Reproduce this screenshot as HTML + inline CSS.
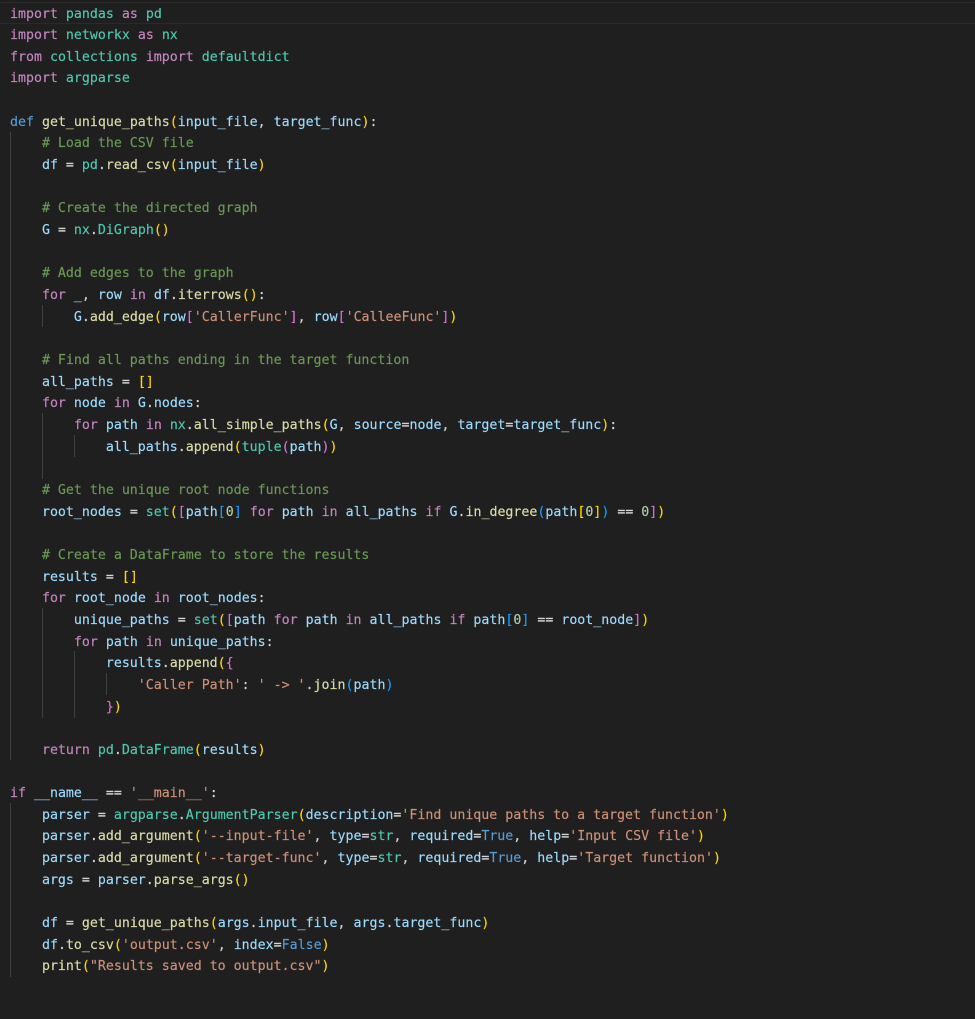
<!DOCTYPE html>
<html><head><meta charset="utf-8"><style>
html,body{margin:0;padding:0;background:#1f1f1f;width:975px;height:1019px;overflow:hidden}
.cur{position:absolute;left:0;top:2px;width:975px;height:20px;border-top:1px solid #2a2a2a;border-bottom:1px solid #2a2a2a}
pre{position:absolute;left:10px;top:3.5px;margin:0;font-family:"DejaVu Sans Mono","Liberation Mono",monospace;font-size:13.27px;line-height:21.65px;color:#d4d4d4;-webkit-text-stroke:0.15px}
.g{position:absolute;width:1px;background:#404040}
.k{color:#c586c0}.d{color:#569cd6}.m{color:#4ec9b0}.v{color:#9cdcfe}.f{color:#dcdcaa}.c{color:#6a9955}.s{color:#ce9178}.n{color:#b5cea8}.y{color:#ffd700}.p{color:#da70d6}.b{color:#179fff}
</style></head><body>
<div class="cur"></div>
<div class="g" style="left:10px;top:132px;height:628px"></div>
<div class="g" style="left:42px;top:305px;height:22px"></div>
<div class="g" style="left:42px;top:413px;height:66px"></div>
<div class="g" style="left:42px;top:608px;height:110px"></div>
<div class="g" style="left:74px;top:435px;height:22px"></div>
<div class="g" style="left:74px;top:651px;height:67px"></div>
<div class="g" style="left:106px;top:673px;height:22px"></div>
<div class="g" style="left:10px;top:803px;height:174px"></div>
<pre><span class="k">import</span> <span class="m">pandas</span> <span class="k">as</span> <span class="m">pd</span>
<span class="k">import</span> <span class="m">networkx</span> <span class="k">as</span> <span class="m">nx</span>
<span class="k">from</span> <span class="m">collections</span> <span class="k">import</span> <span class="m">defaultdict</span>
<span class="k">import</span> <span class="m">argparse</span>

<span class="d">def</span> <span class="f">get_unique_paths</span><span class="y">(</span><span class="v">input_file</span>, <span class="v">target_func</span><span class="y">)</span>:
    <span class="c"># Load the CSV file</span>
    <span class="v">df</span> = <span class="m">pd</span>.<span class="f">read_csv</span><span class="y">(</span><span class="v">input_file</span><span class="y">)</span>

    <span class="c"># Create the directed graph</span>
    <span class="v">G</span> = <span class="m">nx</span>.<span class="m">DiGraph</span><span class="y">()</span>

    <span class="c"># Add edges to the graph</span>
    <span class="k">for</span> <span class="v">_</span>, <span class="v">row</span> <span class="k">in</span> <span class="v">df</span>.<span class="f">iterrows</span><span class="y">()</span>:
        <span class="v">G</span>.<span class="f">add_edge</span><span class="y">(</span><span class="v">row</span><span class="p">[</span><span class="s">'CallerFunc'</span><span class="p">]</span>, <span class="v">row</span><span class="p">[</span><span class="s">'CalleeFunc'</span><span class="p">]</span><span class="y">)</span>

    <span class="c"># Find all paths ending in the target function</span>
    <span class="v">all_paths</span> = <span class="y">[]</span>
    <span class="k">for</span> <span class="v">node</span> <span class="k">in</span> <span class="v">G</span>.<span class="v">nodes</span>:
        <span class="k">for</span> <span class="v">path</span> <span class="k">in</span> <span class="m">nx</span>.<span class="f">all_simple_paths</span><span class="y">(</span><span class="v">G</span>, <span class="v">source</span>=<span class="v">node</span>, <span class="v">target</span>=<span class="v">target_func</span><span class="y">)</span>:
            <span class="v">all_paths</span>.<span class="f">append</span><span class="y">(</span><span class="m">tuple</span><span class="p">(</span><span class="v">path</span><span class="p">)</span><span class="y">)</span>

    <span class="c"># Get the unique root node functions</span>
    <span class="v">root_nodes</span> = <span class="m">set</span><span class="y">(</span><span class="p">[</span><span class="v">path</span><span class="b">[</span><span class="n">0</span><span class="b">]</span> <span class="k">for</span> <span class="v">path</span> <span class="k">in</span> <span class="v">all_paths</span> <span class="k">if</span> <span class="v">G</span>.<span class="f">in_degree</span><span class="b">(</span><span class="v">path</span><span class="y">[</span><span class="n">0</span><span class="y">]</span><span class="b">)</span> == <span class="n">0</span><span class="p">]</span><span class="y">)</span>

    <span class="c"># Create a DataFrame to store the results</span>
    <span class="v">results</span> = <span class="y">[]</span>
    <span class="k">for</span> <span class="v">root_node</span> <span class="k">in</span> <span class="v">root_nodes</span>:
        <span class="v">unique_paths</span> = <span class="m">set</span><span class="y">(</span><span class="p">[</span><span class="v">path</span> <span class="k">for</span> <span class="v">path</span> <span class="k">in</span> <span class="v">all_paths</span> <span class="k">if</span> <span class="v">path</span><span class="b">[</span><span class="n">0</span><span class="b">]</span> == <span class="v">root_node</span><span class="p">]</span><span class="y">)</span>
        <span class="k">for</span> <span class="v">path</span> <span class="k">in</span> <span class="v">unique_paths</span>:
            <span class="v">results</span>.<span class="f">append</span><span class="y">(</span><span class="p">{</span>
                <span class="s">'Caller Path'</span>: <span class="s">' -&gt; '</span>.<span class="f">join</span><span class="b">(</span><span class="v">path</span><span class="b">)</span>
            <span class="p">}</span><span class="y">)</span>

    <span class="k">return</span> <span class="m">pd</span>.<span class="m">DataFrame</span><span class="y">(</span><span class="v">results</span><span class="y">)</span>

<span class="k">if</span> <span class="v">__name__</span> == <span class="s">'__main__'</span>:
    <span class="v">parser</span> = <span class="m">argparse</span>.<span class="m">ArgumentParser</span><span class="y">(</span><span class="v">description</span>=<span class="s">'Find unique paths to a target function'</span><span class="y">)</span>
    <span class="v">parser</span>.<span class="f">add_argument</span><span class="y">(</span><span class="s">'--input-file'</span>, <span class="v">type</span>=<span class="m">str</span>, <span class="v">required</span>=<span class="d">True</span>, <span class="v">help</span>=<span class="s">'Input CSV file'</span><span class="y">)</span>
    <span class="v">parser</span>.<span class="f">add_argument</span><span class="y">(</span><span class="s">'--target-func'</span>, <span class="v">type</span>=<span class="m">str</span>, <span class="v">required</span>=<span class="d">True</span>, <span class="v">help</span>=<span class="s">'Target function'</span><span class="y">)</span>
    <span class="v">args</span> = <span class="v">parser</span>.<span class="f">parse_args</span><span class="y">()</span>

    <span class="v">df</span> = <span class="f">get_unique_paths</span><span class="y">(</span><span class="v">args</span>.<span class="v">input_file</span>, <span class="v">args</span>.<span class="v">target_func</span><span class="y">)</span>
    <span class="v">df</span>.<span class="f">to_csv</span><span class="y">(</span><span class="s">'output.csv'</span>, <span class="v">index</span>=<span class="d">False</span><span class="y">)</span>
    <span class="f">print</span><span class="y">(</span><span class="s">"Results saved to output.csv"</span><span class="y">)</span>
</pre>
</body></html>
